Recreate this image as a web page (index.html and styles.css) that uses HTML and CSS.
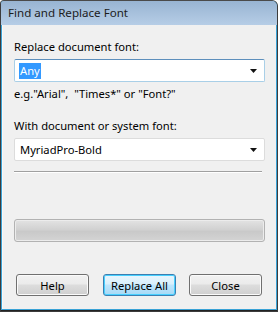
FILE: index.html
```html
<!DOCTYPE html>
<html lang="en">
<head>
    <meta charset="UTF-8">
    <title>Find and Replace Font</title>
    <link rel="stylesheet" href="styles.css">
</head>
<body>
    <div class="window">
        <div class="titlebar">Find and Replace Font</div>
        <div class="content">
            <div class="label">Replace document font:</div>
            <div class="combo combo-active">
                <span class="selected">Any</span>
                <svg class="arrow" viewBox="0 0 7 4"><path d="M0 0h7L3.5 4z"/></svg>
            </div>
            <div class="hint">e.g."Arial",&nbsp; "Times*" or "Font?"</div>

            <div class="label label-second">With document or system font:</div>
            <div class="combo">
                <span class="value">MyriadPro-Bold</span>
                <svg class="arrow" viewBox="0 0 7 4"><path d="M0 0h7L3.5 4z"/></svg>
            </div>

            <div class="separator"></div>

            <div class="progress"></div>

            <div class="buttons">
                <button class="btn">Help</button>
                <button class="btn btn-default">Replace All</button>
                <button class="btn">Close</button>
            </div>
        </div>
    </div>
</body>
</html>
```

FILE: styles.css
```css
html, body {
    margin: 0;
    padding: 0;
}
body {
    width: 278px;
    height: 312px;
    font-family: 'Noto Sans', 'Open Sans', sans-serif;
    font-size: 11.2px;
    color: #000;
    background: #fff;
}
.window {
    box-sizing: border-box;
    width: 278px;
    height: 312px;
    display: flex;
    flex-direction: column;
    border: 1px solid #3c3c3c;
    border-top-color: #4a4a4a;
    border-radius: 4px 6px 0 0;
    background: #39a2d6;
    padding: 0 1px 2px 1px;
    box-shadow: inset 0 -1px 0 #222;
}
.titlebar {
    height: 24px;
    line-height: 23px;
    font-size: 11.6px;
    color: #1c1c1c;
    background: linear-gradient(#98b4d2, #b6cde6);
    border-radius: 3px 5px 0 0;
    margin: 0 -1px;
    padding-left: 7px;
}
.content {
    flex: 1;
    background: #f0f0f0;
    padding: 12px 11px 0 11px;
    border-left: 1px solid #f7f7f7;
    display: flex;
    flex-direction: column;
}
.label {
    height: 16px;
    line-height: 16px;
    margin-top: 2px;
}
.label-second {
    margin-top: 16px;
}
.combo {
    box-sizing: border-box;
    height: 23px;
    margin-top: 4px;
    width: 251px;
    display: flex;
    align-items: center;
    justify-content: space-between;
    background: #fff;
    border: 1px solid #dcdcdc;
    border-radius: 2px;
    padding: 0 7px 0 4px;
}
.combo-active {
    border-color: #a9cfe7;
    border-top-color: #5d8fbc;
}
.selected {
    background: #3399ff;
    color: #fff;
    padding: 0 1px;
    line-height: 16px;
}
.value {
    padding-left: 1px;
}
.arrow {
    width: 7px;
    height: 4px;
    fill: #111;
}
.hint {
    margin-top: 4px;
    height: 16px;
    line-height: 16px;
}
.separator {
    margin-top: 10px;
    width: 248px;
    height: 1px;
    background: #a0a0a0;
    border-bottom: 1px solid #fff;
}
.progress {
    box-sizing: border-box;
    margin-top: 46px;
    width: 251px;
    height: 23px;
    border: 1px solid #b2b2b2;
    border-radius: 3px;
    background: linear-gradient(#e3e3e3, #d1d1d1 45%, #c9c9c9 55%, #d4d4d4);
    box-shadow: inset 0 0 0 1px #ececec;
}
.buttons {
    margin-top: 32px;
    display: flex;
    padding-left: 2px;
    gap: 14px;
}
.buttons .btn:last-child {
    margin-left: -1px;
}
.btn {
    box-sizing: border-box;
    width: 73px;
    height: 22px;
    padding: 0;
    font-family: inherit;
    font-size: 11.2px;
    color: #000;
    border: 1px solid #707070;
    border-radius: 3px;
    background: linear-gradient(#f2f2f2, #ebebeb 45%, #dddddd 50%, #cfcfcf);
    box-shadow: inset 0 0 0 1px #fbfbfb;
}
.btn-default {
    border-color: #3c7fb1;
    background: linear-gradient(#eaf6fd, #d9f0fc 45%, #bee6fd 50%, #a7d9f5);
    box-shadow: inset 0 0 0 1px #48d0ff;
}
```
